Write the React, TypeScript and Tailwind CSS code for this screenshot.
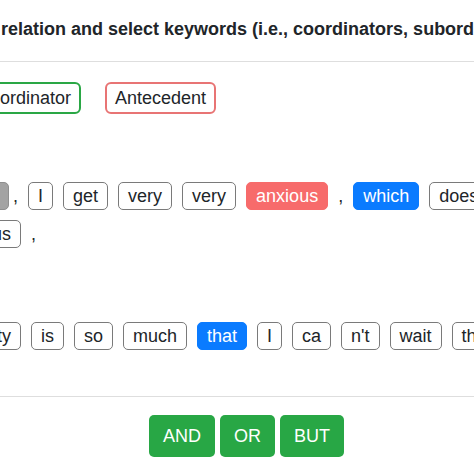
import React from 'react';

type Kind = 'plain' | 'red' | 'blue' | 'gray';

const tokenStyles: Record<Kind, string> = {
  plain: 'border-[#7a7a7a] bg-white text-[#212529]',
  red: 'border-[#f76b6b] bg-[#f76b6b] text-white',
  blue: 'border-[#0a7bff] bg-[#0a7bff] text-white',
  gray: 'border-[#8f8f8f] bg-[#a3a3a3] text-white',
};

const Token: React.FC<{ word: string; kind?: Kind }> = ({ word, kind = 'plain' }) => (
  <span
    className={`h-[28px] shrink-0 flex items-center px-[9px] border rounded-[5px] text-[18px] leading-none ${tokenStyles[kind]}`}
  >
    {word}
  </span>
);

const Comma: React.FC<{ className?: string }> = ({ className = '' }) => (
  <span className={`shrink-0 text-[18px] leading-none text-[#212529] ${className}`}>,</span>
);

// the screenshot is cropped on the left: a fixed-width slot whose content overflows to the left
const Cut: React.FC<{ width: string; children: React.ReactNode }> = ({ width, children }) => (
  <div className={`${width} shrink-0 flex justify-end`}>{children}</div>
);

export default function App() {
  return (
    <div className="w-[474px] h-[474px] overflow-hidden bg-white text-[#212529] font-['Liberation_Sans',Arial,sans-serif]">
      {/* header */}
      <div className="h-[62px] border-b border-[#dedede] pt-[16px]">
        <h2 className="text-[18px] leading-[27px] font-bold whitespace-nowrap pl-[1px]">
          relation and select keywords (i.e., coordinators, subordinators, antecedents)
        </h2>
      </div>

      {/* legend */}
      <div className="mt-[20px] flex items-center gap-[24px] whitespace-nowrap">
        <Cut width="w-[81px]">
          <span className="h-[32px] shrink-0 flex items-center px-[8px] border-2 border-[#2aa745] rounded-[6px] text-[18px]">
            Coordinator
          </span>
        </Cut>
        <span className="h-[32px] shrink-0 flex items-center px-[8px] border-2 border-[#e87474] rounded-[6px] text-[18px]">
          Antecedent
        </span>
      </div>

      {/* sentence 1 */}
      <div className="mt-[68px] flex flex-col gap-[10px]">
        <div className="flex items-center gap-[10px] whitespace-nowrap">
          <Cut width="w-[9px]">
            <Token word="nervous" kind="gray" />
          </Cut>
          <Comma className="-ml-[6px]" />
          <Token word="I" />
          <Token word="get" />
          <Token word="very" />
          <Token word="very" />
          <Token word="anxious" kind="red" />
          <Comma />
          <Token word="which" kind="blue" />
          <Token word="does" />
          <Token word="not" />
        </div>
        <div className="flex items-center gap-[10px] whitespace-nowrap">
          <Cut width="w-[21px]">
            <Token word="nervous" />
          </Cut>
          <Comma />
        </div>
      </div>

      {/* sentence 2 */}
      <div className="mt-[74px] flex items-center gap-[10px] whitespace-nowrap">
        <Cut width="w-[21px]">
          <Token word="anxiety" />
        </Cut>
        <Token word="is" />
        <Token word="so" />
        <Token word="much" />
        <Token word="that" kind="blue" />
        <Token word="I" />
        <Token word="ca" />
        <Token word="n't" />
        <Token word="wait" />
        <Token word="the" />
      </div>

      {/* actions */}
      <div className="mt-[46px] border-t border-[#dedede] pt-[18px] pl-[149px] flex gap-[5px]">
        {['AND', 'OR', 'BUT'].map(label => (
          <button
            key={label}
            className="h-[42px] px-[14px] rounded-[5px] bg-[#28a745] text-white text-[18px] leading-none"
          >
            {label}
          </button>
        ))}
      </div>
    </div>
  );
}
